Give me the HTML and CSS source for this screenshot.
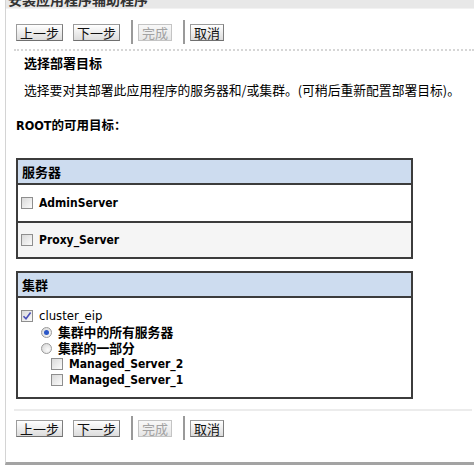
FILE: index.html
```html
<!DOCTYPE html>
<html lang="zh-CN">
<head>
    <meta charset="UTF-8">
    <title>安装应用程序辅助程序</title>
    <link rel="stylesheet" href="styles.css">
</head>
<body>
    <div class="wizard">
        <div class="title-bar"><span class="title">安装应用程序辅助程序</span></div>
        <div class="content">
            <div class="toolbar">
                <button class="btn">上一步</button>
                <button class="btn">下一步</button>
                <span class="sep"></span>
                <button class="btn disabled">完成</button>
                <span class="sep"></span>
                <button class="btn">取消</button>
            </div>

            <div class="intro">
                <h2 class="step-title">选择部署目标</h2>
                <p class="step-desc">选择要对其部署此应用程序的服务器和/或集群。(可稍后重新配置部署目标)。</p>
            </div>

            <h3 class="targets-title">ROOT的可用目标：</h3>

            <div class="target-table">
                <div class="table-head">服务器</div>
                <div class="table-row">
                    <span class="check"></span><span class="name bold">AdminServer</span>
                </div>
                <div class="table-row alt">
                    <span class="check"></span><span class="name bold">Proxy_Server</span>
                </div>
            </div>

            <div class="target-table cluster">
                <div class="table-head">集群</div>
                <div class="cluster-body">
                    <div class="line">
                        <span class="check checked">
                            <svg width="10" height="10" viewBox="0 0 10 10"><path d="M1.5 5.2 L4 7.8 L8.6 1.6" fill="none" stroke="#4a4fb8" stroke-width="1.6"/></svg>
                        </span><span class="name">cluster_eip</span>
                    </div>
                    <div class="line indent-1">
                        <span class="radio selected"></span><span class="name bold cjk">集群中的所有服务器</span>
                    </div>
                    <div class="line indent-1">
                        <span class="radio"></span><span class="name bold cjk">集群的一部分</span>
                    </div>
                    <div class="line indent-2">
                        <span class="check"></span><span class="name bold">Managed_Server_2</span>
                    </div>
                    <div class="line indent-2">
                        <span class="check"></span><span class="name bold">Managed_Server_1</span>
                    </div>
                </div>
            </div>

            <div class="toolbar bottom">
                <button class="btn">上一步</button>
                <button class="btn">下一步</button>
                <span class="sep"></span>
                <button class="btn disabled">完成</button>
                <span class="sep"></span>
                <button class="btn">取消</button>
            </div>
        </div>
    </div>
</body>
</html>
```

FILE: styles.css
```css
body {
    margin: 0;
    background: #ffffff;
    color: #000000;
    font-family: "DejaVu Sans Condensed", "DejaVu Sans", "Noto Sans CJK SC", sans-serif;
    font-size: 13px;
}
.wizard {
    margin-left: 5px;
    height: 462px;
    border-left: 1px solid #d4d4d4;
    border-bottom: 3px solid #a3a3a3;
    overflow: hidden;
}
.title-bar {
    height: 8px;
    background: #e8e8e8;
    border-bottom: 1px solid #f2f2f2;
    overflow: hidden;
    padding-left: 2px;
}
.title {
    display: block;
    margin-top: -9px;
    font-family: "Noto Sans CJK SC", sans-serif;
    font-size: 14px;
    font-weight: bold;
    line-height: 16px;
    color: #333333;
}
.content {
    padding-left: 10px;
}
.toolbar {
    display: flex;
    align-items: center;
    gap: 10px;
    height: 24px;
    margin-top: 11px;
}
.toolbar.bottom {
    margin-top: 0;
    padding-top: 5px;
    border-top: 2px solid #ececec;
    margin-left: -2px;
    padding-left: 2px;
    margin-right: 2px;
}
.btn {
    height: 17px;
    padding: 0 3px;
    border: 1px solid #9c9c9c;
    border-bottom-color: #6f6f6f;
    border-right-color: #7d7d7d;
    background: linear-gradient(#ffffff, #dcdcdc);
    font-family: "Noto Sans CJK SC", sans-serif;
    font-size: 13px;
    line-height: 15px;
    color: #111111;
}
.btn.disabled {
    color: #a2a2a2;
    border-color: #c4c4c4;
    background: linear-gradient(#f8f8f8, #e6e6e6);
}
.sep {
    width: 2px;
    height: 24px;
    background: #9a9a9a;
    margin-left: 1px;
    margin-right: -5px;
}
.intro {
    margin-top: 5px;
    margin-left: -2px;
    padding-left: 10px;
    border-top: 2px dotted #d6d6d6;
}
.step-title {
    margin: 4px 0 0;
    font-family: "Noto Sans CJK SC", sans-serif;
    font-size: 13px;
    line-height: 16px;
    font-weight: bold;
}
.step-desc {
    margin: 11px 0 0;
    font-family: "Noto Sans CJK SC", sans-serif;
    font-size: 12.8px;
    line-height: 16px;
}
.targets-title {
    margin: 20px 0 0;
    font-size: 12.5px;
    line-height: 16px;
    font-weight: bold;
}
.target-table {
    width: 393px;
    margin-top: 24px;
    border: 2px solid #3c3c3c;
}
.target-table.cluster {
    margin-top: 12px;
    margin-bottom: 10px;
}
.table-head {
    height: 23px;
    line-height: 23px;
    padding-left: 4px;
    background: #cddcef;
    border-bottom: 2px solid #3c3c3c;
    font-family: "Noto Sans CJK SC", sans-serif;
    font-weight: bold;
    font-size: 13px;
}
.table-row {
    display: flex;
    align-items: center;
    height: 36px;
    padding-left: 3px;
    background: #ffffff;
}
.table-row + .table-row {
    border-top: 2px solid #3c3c3c;
}
.table-row.alt {
    background: #f5f5f5;
    height: 34px;
}
.cluster-body {
    padding: 10px 0 9px 3px;
}
.line {
    display: flex;
    align-items: center;
    height: 16px;
}
.indent-1 {
    padding-left: 20px;
}
.indent-2 {
    padding-left: 30px;
}
.check {
    box-sizing: border-box;
    width: 12px;
    height: 12px;
    border: 1px solid #8e8e8e;
    background: linear-gradient(135deg, #d9d9d9, #fbfbfb);
    display: flex;
    align-items: center;
    justify-content: center;
    flex-shrink: 0;
}
.radio {
    box-sizing: border-box;
    width: 11px;
    height: 11px;
    border-radius: 50%;
    border: 1px solid #9a9a9a;
    background: radial-gradient(circle at 65% 65%, #fbfbfb, #d2d2d2);
    display: flex;
    align-items: center;
    justify-content: center;
    flex-shrink: 0;
}
.radio.selected::after {
    content: "";
    width: 5px;
    height: 5px;
    border-radius: 50%;
    background: #2b57c7;
}
.name {
    margin-left: 6px;
    font-size: 13px;
    line-height: 16px;
    white-space: nowrap;
}
.bold {
    font-weight: bold;
    font-size: 12px;
}
.bold.cjk {
    font-family: "Noto Sans CJK SC", sans-serif;
    font-size: 12.8px;
}
```
